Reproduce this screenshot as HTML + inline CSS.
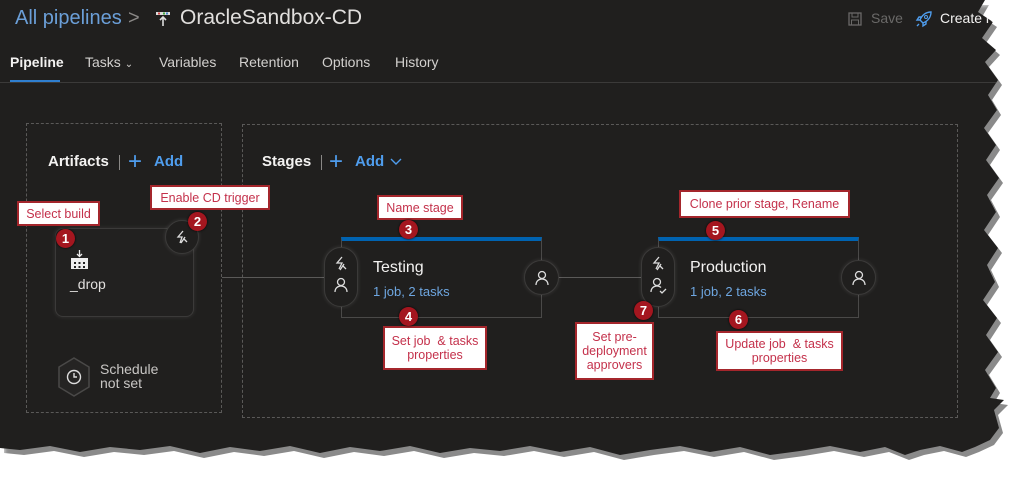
<!DOCTYPE html>
<html><head><meta charset="utf-8">
<style>
*{margin:0;padding:0;box-sizing:border-box}
body{width:1024px;height:476px;background:#fff;position:relative;overflow:hidden;font-family:"Segoe UI","Liberation Sans",sans-serif}
.shadow,.dark{position:absolute;left:0;top:0;width:1024px;height:476px}
.shadow{background:#8a8a8a;filter:blur(2.5px);transform:translate(4px,5px)}
.clip{clip-path:polygon(0 0,985px 0,978px 12px,993px 22px,982px 38px,996px 50px,985px 62px,998px 80px,988px 95px,997px 110px,984px 128px,996px 145px,986px 160px,999px 178px,987px 195px,996px 212px,984px 230px,998px 248px,987px 265px,995px 282px,983px 300px,997px 318px,986px 335px,998px 352px,985px 370px,996px 388px,990px 398px,1004px 400px,994px 410px,999px 428px,990px 440px,975px 447px,962px 452px,940px 446px,920px 450px,905px 455px,885px 447px,860px 452px,830px 446px,800px 451px,770px 455px,740px 447px,710px 452px,680px 446px,650px 450px,620px 455px,590px 447px,560px 452px,530px 446px,500px 451px,470px 448px,440px 453px,410px 446px,380px 451px,350px 447px,320px 453px,290px 446px,260px 451px,230px 447px,200px 453px,170px 446px,140px 450px,110px 447px,80px 452px,50px 446px,20px 450px,0 448px)}
.dark{background:#201f1e}
.a{position:absolute;white-space:nowrap}
.callout{position:absolute;background:#fff;border:2px solid #a4262c;color:#c4314b;font-family:"Liberation Sans",Arial,sans-serif;font-size:12.5px;text-align:center;line-height:14px;display:flex;align-items:center;justify-content:center}
.num{position:absolute;width:19px;height:19px;border-radius:50%;background:#a4161f;color:#fff;font-family:"Liberation Sans",Arial,sans-serif;font-weight:bold;font-size:13px;line-height:19px;text-align:center;box-shadow:0 0 2px #000}
.dash{position:absolute;border:1px dashed #5a5958}
.circ{position:absolute;border-radius:50%;background:#201f1e;border:1px solid #3b3a39;box-shadow:0 0 4px rgba(255,255,255,.12);display:flex;align-items:center;justify-content:center}
.pill{position:absolute;width:34px;height:60px;border-radius:17px;background:#201f1e;border:1px solid #3b3a39;box-shadow:0 0 4px rgba(255,255,255,.12)}
.stage{position:absolute;border:1px solid #4a4948;border-top:4px solid #0063b1;height:81px}
</style></head><body>
<div class="shadow clip"></div>
<div class="dark clip">
  <div class="a" style="left:15px;top:7px;font-size:20px;color:#6b9fd8">All pipelines</div>
  <div class="a" style="left:128px;top:7px;font-size:20px;color:#8a8886">&gt;</div>
  <svg class="a" style="left:155px;top:11px" width="16" height="16" viewBox="0 0 16 16"><rect x="1" y="1" width="14" height="3" fill="#ddd"/><rect x="3" y="1.5" width="2" height="2" fill="#c44"/><rect x="8" y="1.5" width="2" height="2" fill="#4a4"/><rect x="11" y="1.5" width="2" height="2" fill="#48c"/><path d="M8 15V6M5 9l3-3 3 3" stroke="#ddd" stroke-width="1.6" fill="none"/></svg>
  <div class="a" style="left:180px;top:6px;font-size:21px;color:#e1dfdd">OracleSandbox-CD</div>
  <svg class="a" style="left:848px;top:12px" width="14" height="14" viewBox="0 0 14 14"><rect x="1" y="1" width="12" height="12" fill="none" stroke="#6a6968" stroke-width="1.3"/><rect x="4" y="1" width="6" height="4" fill="none" stroke="#6a6968"/><rect x="3.5" y="8" width="7" height="5" fill="none" stroke="#6a6968"/></svg>
  <div class="a" style="left:871px;top:10px;font-size:14px;color:#6a6968">Save</div>
  <svg class="a" style="left:915px;top:11px" width="18" height="17" viewBox="0 0 18 17"><path d="M16 1C11 1 7 4 5 9l3 3c5-2 8-6 8-11zM5 9L2 9 4 6h3M8 12v3l3-2v-3M4 13l-2 2" stroke="#4f9ded" stroke-width="1.4" fill="none"/><circle cx="11" cy="6" r="1.5" fill="none" stroke="#4f9ded"/></svg>
  <div class="a" style="left:940px;top:10px;font-size:14px;color:#f3f2f1">Create re</div>

  <div class="a" style="left:10px;top:54px;font-size:14px;color:#f3f2f1;font-weight:bold">Pipeline</div>
  <div class="a" style="left:10px;top:80px;width:50px;height:2px;background:#2f7fd0"></div>
  <div class="a" style="left:85px;top:54px;font-size:14px;color:#d2d0ce">Tasks <span style="font-size:10px">&#8964;</span></div>
  <div class="a" style="left:159px;top:54px;font-size:14px;color:#d2d0ce">Variables</div>
  <div class="a" style="left:239px;top:54px;font-size:14px;color:#d2d0ce">Retention</div>
  <div class="a" style="left:322px;top:54px;font-size:14px;color:#d2d0ce">Options</div>
  <div class="a" style="left:395px;top:54px;font-size:14px;color:#d2d0ce">History</div>
  <div class="a" style="left:0;top:82px;width:1000px;height:1px;background:#3b3a39"></div>

  <div class="dash" style="left:26px;top:123px;width:196px;height:290px"></div>
  <div class="dash" style="left:242px;top:124px;width:716px;height:294px"></div>

  <div class="a" style="left:48px;top:153px;font-size:15px;font-weight:bold;color:#f3f2f1">Artifacts</div>
  <div class="a" style="left:119px;top:155px;width:1px;height:15px;background:#8a8886"></div>
  <div class="a" style="left:128px;top:149px;font-size:24px;font-weight:300;color:#4f9ded;line-height:26px">+</div>
  <div class="a" style="left:154px;top:153px;font-size:15px;font-weight:bold;color:#4f9ded">Add</div>

  <div class="a" style="left:262px;top:153px;font-size:15px;font-weight:bold;color:#f3f2f1">Stages</div>
  <div class="a" style="left:321px;top:155px;width:1px;height:15px;background:#8a8886"></div>
  <div class="a" style="left:329px;top:149px;font-size:24px;font-weight:300;color:#4f9ded;line-height:26px">+</div>
  <div class="a" style="left:355px;top:153px;font-size:15px;font-weight:bold;color:#4f9ded">Add</div>
  <svg class="a" style="left:390px;top:158px" width="12" height="8" viewBox="0 0 12 8"><path d="M1 1l5 5 5-5" stroke="#4f9ded" stroke-width="1.4" fill="none"/></svg>

  <div class="a" style="left:55px;top:228px;width:139px;height:89px;border-radius:8px;border:1px solid #3b3a39;background:#222120;box-shadow:0 0 5px rgba(255,255,255,.1)"></div>
  <svg class="a" style="left:70px;top:250px" width="19" height="20" viewBox="0 0 19 20"><path d="M9.5 0v6M7 4l2.5 2.5L12 4" stroke="#eee" stroke-width="1.3" fill="none"/><path d="M1 8h17v11H1z" fill="#eee"/><rect x="4" y="12" width="2" height="2" fill="#222"/><rect x="8.5" y="12" width="2" height="2" fill="#222"/><rect x="13" y="12" width="2" height="2" fill="#222"/><rect x="4" y="16" width="2" height="2" fill="#222"/><rect x="8.5" y="16" width="2" height="2" fill="#222"/><rect x="13" y="16" width="2" height="2" fill="#222"/></svg>
  <div class="a" style="left:70px;top:276px;font-size:14px;color:#e1dfdd">_drop</div>
  <div class="circ" style="left:165px;top:220px;width:34px;height:34px"><svg width="14" height="14" viewBox="0 0 14 14"><path d="M8 1L3 7h4l-2 6M10 7l-4 6M9 9l3 3" stroke="#ddd" stroke-width="1.3" fill="none"/></svg></div>

  <div class="a" style="left:222px;top:277px;width:104px;height:1px;background:#5a5958"></div>
  <div class="a" style="left:558px;top:277px;width:84px;height:1px;background:#5a5958"></div>

  <div class="stage" style="left:341px;top:237px;width:201px"></div>
  <div class="pill" style="left:324px;top:247px"></div>
  <svg class="a" style="left:333px;top:256px" width="16" height="40" viewBox="0 0 16 40"><path d="M9 1L4 7h5l-3 6M11 8l-4 6M10 10l3 3" stroke="#ddd" stroke-width="1.3" fill="none"/><circle cx="8" cy="26" r="3.5" stroke="#ddd" stroke-width="1.3" fill="none"/><path d="M2 36c0-4 3-6 6-6s6 2 6 6" stroke="#ddd" stroke-width="1.3" fill="none"/></svg>
  <div class="a" style="left:373px;top:259px;font-size:16px;color:#f3f2f1">Testing</div>
  <div class="a" style="left:373px;top:284px;font-size:13px;color:#6ea6e0">1 job, 2 tasks</div>
  <div class="circ" style="left:524px;top:260px;width:35px;height:35px"><svg width="14" height="16" viewBox="0 0 14 16"><circle cx="7" cy="5" r="3.5" stroke="#ddd" stroke-width="1.3" fill="none"/><path d="M1 15c0-4 3-6 6-6s6 2 6 6" stroke="#ddd" stroke-width="1.3" fill="none"/></svg></div>

  <div class="stage" style="left:658px;top:237px;width:201px"></div>
  <div class="pill" style="left:641px;top:247px"></div>
  <svg class="a" style="left:650px;top:256px" width="18" height="40" viewBox="0 0 18 40"><path d="M9 1L4 7h5l-3 6M11 8l-4 6M10 10l3 3" stroke="#ddd" stroke-width="1.3" fill="none"/><circle cx="7" cy="26" r="3.5" stroke="#ddd" stroke-width="1.3" fill="none"/><path d="M1 36c0-4 3-6 6-6 2 0 3 .5 4 1.5M10 35l2 2 4-4" stroke="#ddd" stroke-width="1.3" fill="none"/></svg>
  <div class="a" style="left:690px;top:259px;font-size:16px;color:#f3f2f1">Production</div>
  <div class="a" style="left:690px;top:284px;font-size:13px;color:#6ea6e0">1 job, 2 tasks</div>
  <div class="circ" style="left:841px;top:260px;width:35px;height:35px"><svg width="14" height="16" viewBox="0 0 14 16"><circle cx="7" cy="5" r="3.5" stroke="#ddd" stroke-width="1.3" fill="none"/><path d="M1 15c0-4 3-6 6-6s6 2 6 6" stroke="#ddd" stroke-width="1.3" fill="none"/></svg></div>

  <svg class="a" style="left:56px;top:356px" width="36" height="42" viewBox="0 0 36 42"><path d="M18 2L33 11v20L18 40 3 31V11z" fill="#252423" stroke="#4a4948" stroke-width="1.5"/><circle cx="18" cy="21" r="6.5" stroke="#ddd" stroke-width="1.4" fill="none"/><path d="M18 17v4h3" stroke="#ddd" stroke-width="1.4" fill="none"/></svg>
  <div class="a" style="left:100px;top:362px;font-size:14px;line-height:14px;color:#c8c6c4">Schedule<br>not set</div>

  <div class="callout" style="left:17px;top:201px;width:83px;height:25px">Select build</div>
  <div class="callout" style="left:150px;top:185px;width:120px;height:25px">Enable CD trigger</div>
  <div class="callout" style="left:377px;top:195px;width:86px;height:25px">Name stage</div>
  <div class="callout" style="left:679px;top:190px;width:171px;height:28px">Clone prior stage, Rename</div>
  <div class="callout" style="left:383px;top:326px;width:104px;height:44px">Set job &nbsp;&amp; tasks<br>properties</div>
  <div class="callout" style="left:575px;top:322px;width:79px;height:58px">Set pre-<br>deployment<br>approvers</div>
  <div class="callout" style="left:716px;top:331px;width:127px;height:40px">Update job &nbsp;&amp; tasks<br>properties</div>

  <div class="num" style="left:56px;top:229px">1</div>
  <div class="num" style="left:188px;top:212px">2</div>
  <div class="num" style="left:399px;top:220px">3</div>
  <div class="num" style="left:399px;top:307px">4</div>
  <div class="num" style="left:706px;top:221px">5</div>
  <div class="num" style="left:729px;top:310px">6</div>
  <div class="num" style="left:634px;top:301px">7</div>
</div>
</body></html>
